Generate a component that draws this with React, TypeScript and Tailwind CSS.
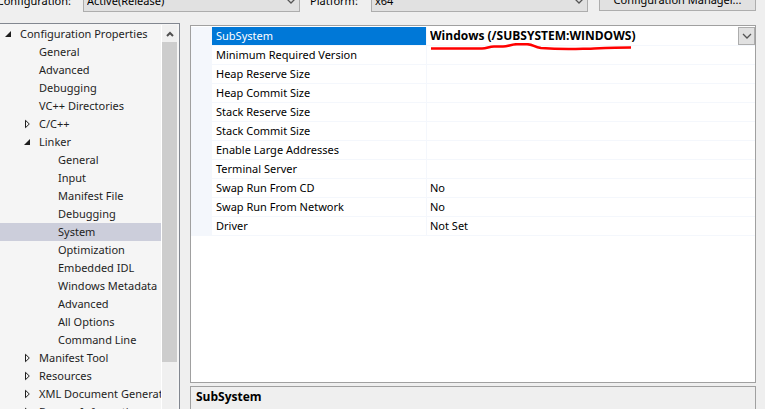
import { FC, useState } from "react";

interface TreeItem {
  id: string;
  label: string;
  level: number;
  state?: "open" | "closed";
}

const treeItems: TreeItem[] = [
  { id: "root", label: "Configuration Properties", level: 0, state: "open" },
  { id: "general", label: "General", level: 1 },
  { id: "advanced", label: "Advanced", level: 1 },
  { id: "debugging", label: "Debugging", level: 1 },
  { id: "vc-dirs", label: "VC++ Directories", level: 1 },
  { id: "cpp", label: "C/C++", level: 1, state: "closed" },
  { id: "linker", label: "Linker", level: 1, state: "open" },
  { id: "linker-general", label: "General", level: 2 },
  { id: "linker-input", label: "Input", level: 2 },
  { id: "linker-manifest", label: "Manifest File", level: 2 },
  { id: "linker-debugging", label: "Debugging", level: 2 },
  { id: "linker-system", label: "System", level: 2 },
  { id: "linker-optimization", label: "Optimization", level: 2 },
  { id: "linker-idl", label: "Embedded IDL", level: 2 },
  { id: "linker-metadata", label: "Windows Metadata", level: 2 },
  { id: "linker-advanced", label: "Advanced", level: 2 },
  { id: "linker-all", label: "All Options", level: 2 },
  { id: "linker-cmd", label: "Command Line", level: 2 },
  { id: "manifest-tool", label: "Manifest Tool", level: 1, state: "closed" },
  { id: "resources", label: "Resources", level: 1, state: "closed" },
  { id: "xml", label: "XML Document Generator", level: 1, state: "closed" },
  { id: "browse", label: "Browse Information", level: 1, state: "closed" },
];

const properties = [
  { name: "Minimum Required Version", value: "" },
  { name: "Heap Reserve Size", value: "" },
  { name: "Heap Commit Size", value: "" },
  { name: "Stack Reserve Size", value: "" },
  { name: "Stack Commit Size", value: "" },
  { name: "Enable Large Addresses", value: "" },
  { name: "Terminal Server", value: "" },
  { name: "Swap Run From CD", value: "No" },
  { name: "Swap Run From Network", value: "No" },
  { name: "Driver", value: "Not Set" },
];

const indents = ["pl-0", "pl-[19px]", "pl-[38px]"];

const Chevron: FC<{ className?: string }> = ({ className }) => (
  <svg
    width="10"
    height="6"
    viewBox="0 0 10 6"
    fill="none"
    stroke="#555"
    strokeWidth="1.3"
    className={className}
  >
    <path d="M1 1l4 4 4-4" />
  </svg>
);

const Expander: FC<{ state?: "open" | "closed" }> = ({ state }) => (
  <span className="flex w-5 shrink-0 justify-center pr-1">
    {state && (
      <svg width="8" height="10" viewBox="0 0 8 10">
        {state === "open" ? (
          <path d="M7 2v6H1z" fill="#1e1e1e" />
        ) : (
          <path d="M2.5 1.3v7.4L6.3 5z" fill="none" stroke="#1e1e1e" />
        )}
      </svg>
    )}
  </span>
);

interface ComboProps {
  id: string;
  label: string;
  value: string;
  labelClass: string;
}

const Combo: FC<ComboProps> = ({ id, label, value, labelClass }) => (
  <>
    <label htmlFor={id} className={labelClass}>
      {label}
    </label>
    <div className="relative w-[217px] shrink-0">
      <select
        id={id}
        className="block h-[22px] w-full appearance-none border border-[#adadad] bg-[#e1e1e1] px-[3px]"
      >
        <option>{value}</option>
      </select>
      <Chevron className="pointer-events-none absolute top-2 right-1" />
    </div>
  </>
);

const App: FC = () => {
  const [selected, setSelected] = useState("linker-system");

  return (
    <div className="flex h-screen flex-col overflow-hidden bg-[#efefef] font-['Noto_Sans',sans-serif] text-[11px] leading-4 text-black">
      <header className="flex h-3 shrink-0 items-end pr-[9px]">
        <Combo
          id="configuration"
          label="Configuration:"
          value="Active(Release)"
          labelClass="flex h-[22px] w-[83px] shrink-0 items-center justify-end pr-3"
        />
        <Combo
          id="platform"
          label="Platform:"
          value="x64"
          labelClass="flex h-[22px] w-[71px] shrink-0 items-center pl-[10px]"
        />
        <button
          type="button"
          className="mb-px ml-[11px] h-[22px] flex-1 border border-[#adadad] bg-[#e1e1e1] whitespace-nowrap"
        >
          Configuration Manager...
        </button>
      </header>

      <div className="flex min-h-0 flex-1">
        <nav className="mt-[11px] flex w-[180px] shrink-0 overflow-hidden border-t border-r border-[#828790] bg-[#f5f5f5] pt-px pr-0.5">
          <ul className="min-w-0 flex-1 overflow-hidden border-r border-white">
            {treeItems.map((item) => (
              <li key={item.id}>
                <button
                  type="button"
                  onClick={() => setSelected(item.id)}
                  className={`flex h-[18px] w-full items-center whitespace-nowrap text-[#1e1e1e] ${
                    indents[item.level]
                  } ${selected === item.id ? "bg-[#cccedb]" : ""}`}
                >
                  <Expander state={item.state} />
                  {item.label}
                </button>
              </li>
            ))}
          </ul>
          <div className="flex w-[15px] shrink-0 flex-col bg-[#f0f0f0]">
            <button
              type="button"
              aria-label="Scroll up"
              className="flex h-[17px] items-center justify-center"
            >
              <svg width="8" height="6" viewBox="0 0 8 6" fill="none">
                <path d="M1 5l3-3 3 3" stroke="#505050" strokeWidth="2" />
              </svg>
            </button>
            <div className="h-5/6 bg-[#cdcdcd]" />
          </div>
        </nav>

        <main className="mt-[13px] mr-[9px] ml-[10px] flex min-w-0 flex-1 flex-col gap-[3px]">
          <section className="flex-1 border border-[#a0a0a0] bg-white pt-px">
            <table className="w-full table-fixed border-separate border-spacing-0">
              <colgroup>
                <col className="w-[21px]" />
                <col className="w-[215px]" />
                <col />
              </colgroup>
              <tbody>
                <tr className="h-[19px]">
                  <td className="bg-[#f4f7fc] p-0" />
                  <th className="border-r border-b border-[#f4f7fc] bg-[#0078d7] p-0 pl-1 text-left font-normal text-white">
                    <label htmlFor="subsystem">SubSystem</label>
                  </th>
                  <td className="relative border-b border-[#f4f7fc] p-0">
                    <select
                      id="subsystem"
                      className="block h-[18px] w-full appearance-none pl-[3px] font-['Open_Sans',sans-serif] text-xs font-bold"
                    >
                      <option>Windows (/SUBSYSTEM:WINDOWS)</option>
                    </select>
                    <span className="pointer-events-none absolute top-0 right-0 flex h-[18px] w-[17px] items-center justify-center border border-[#adadad] bg-[#e1e1e1]">
                      <Chevron />
                    </span>
                    <svg
                      width="202"
                      height="8"
                      viewBox="0 0 202 8"
                      className="pointer-events-none absolute top-4 left-[3px]"
                    >
                      <path
                        d="M1 5.500h51c5 0 7-2 12-2h9c5 0 8-2.300 14-2.300h10c6 0 7 3 14 3.800 15 1.200 30 1.200 42 .800 15-.500 30-1.300 48-1.300"
                        fill="none"
                        stroke="#ff0000"
                        strokeWidth="2.500"
                      />
                    </svg>
                  </td>
                </tr>
                {properties.map((property) => (
                  <tr key={property.name} className="h-[19px]">
                    <td className="bg-[#f4f7fc] p-0" />
                    <th className="border-r border-b border-[#f4f7fc] p-0 pl-1 text-left font-normal">
                      {property.name}
                    </th>
                    <td className="border-b border-[#f4f7fc] p-0 pl-[3px]">
                      {property.value}
                    </td>
                  </tr>
                ))}
              </tbody>
            </table>
          </section>
          <section className="h-[23px] shrink-0 border border-b-0 border-[#a0a0a0] px-[5px] pt-0.5">
            <h2 className="font-['Open_Sans',sans-serif] text-xs font-bold">
              SubSystem
            </h2>
          </section>
        </main>
      </div>
    </div>
  );
};

export default App;
